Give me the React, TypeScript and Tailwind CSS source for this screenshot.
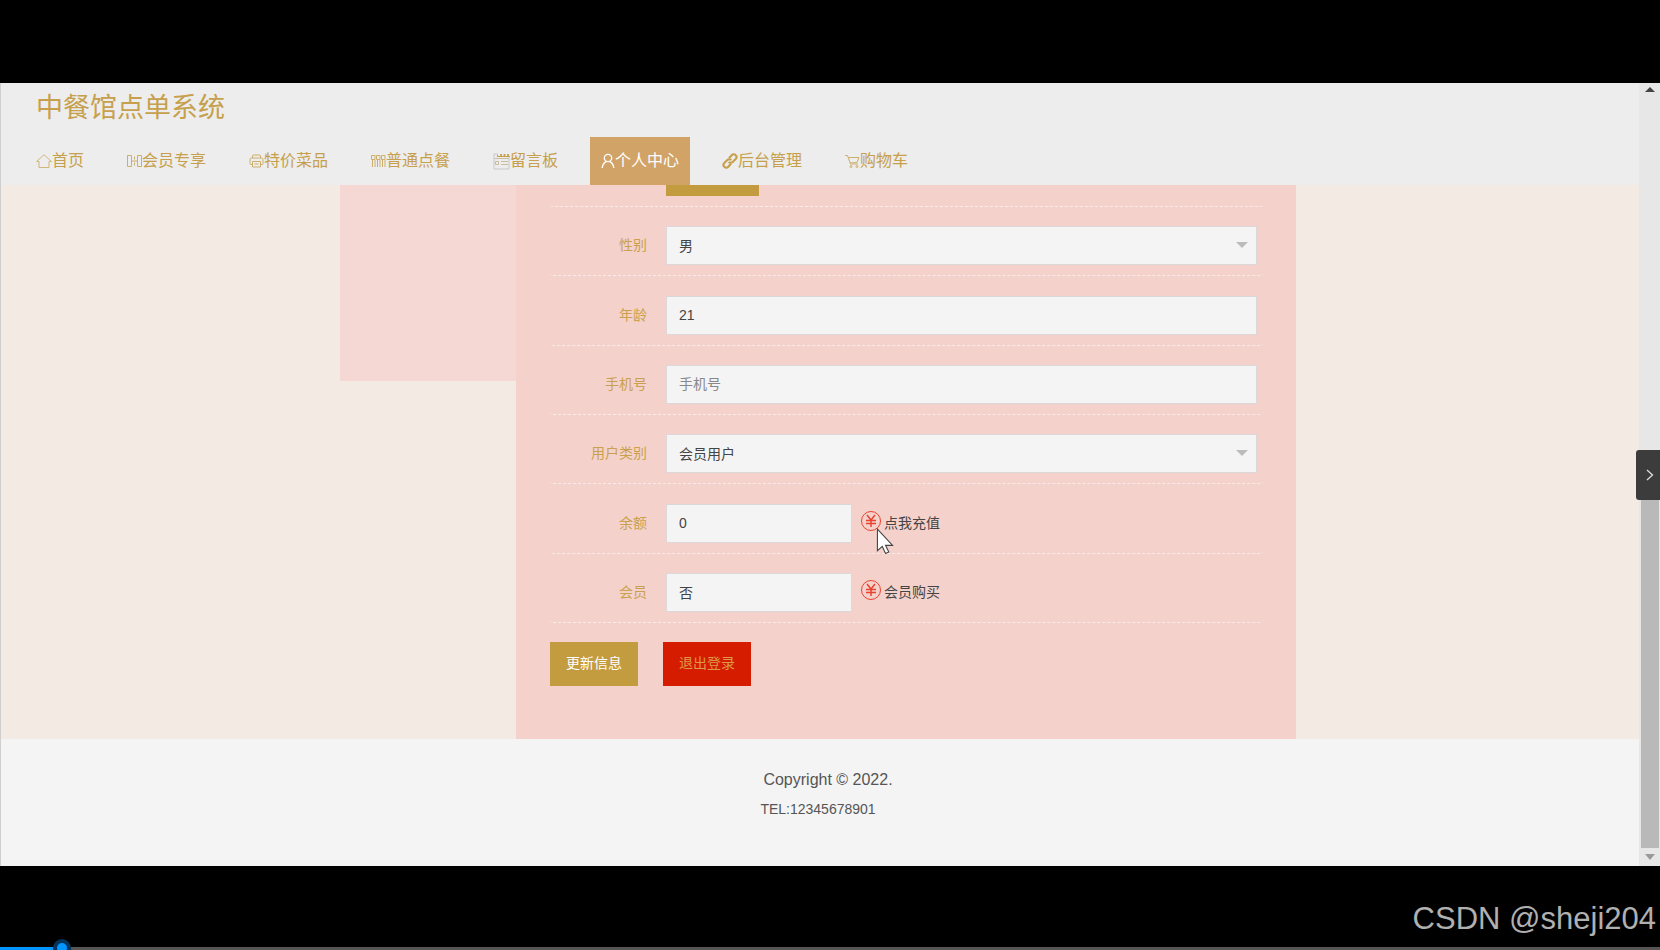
import React from "react";

const stroke = { fill: "none", stroke: "currentColor", strokeWidth: 1 } as const;

const HomeIcon = () => (
  <svg width="16" height="16" viewBox="0 0 16 16" {...stroke} className="opacity-70">
    <path d="M.6 8.500 8 1.700l7.400 6.800H13v6H3v-6z" />
  </svg>
);
const VipIcon = () => (
  <svg width="15" height="16" viewBox="0 0 15 16" {...stroke} className="opacity-80">
    <path d="M.5 2.500h4v11h-4zM10.500 2.500h4v11h-4zM7.500 3.500v3M7.500 9.500v3M5 8h5" />
  </svg>
);
const PrintIcon = () => (
  <svg width="15" height="16" viewBox="0 0 15 16" {...stroke} className="opacity-80">
    <path d="M3.500 5V3a1 1 0 0 1 1-1h6a1 1 0 0 1 1 1v2M3.500 11.500H2a1 1 0 0 1-1-1v-4A1.500 1.500 0 0 1 2.500 5h10A1.500 1.500 0 0 1 14 6.500v4a1 1 0 0 1-1 1h-1.500M3.500 8.500h8v5.500h-8zM5.500 11h4" />
  </svg>
);
const GridIcon = () => (
  <svg width="15" height="16" viewBox="0 0 15 16" {...stroke} className="opacity-80">
    <path d="M.5 2.500h3.500v4H.5zM5.500 2.500h3.500v4H5.500zM10.500 2.500h3.500v4h-3.500zM1.500 7v7M4 7v7M6.500 7v7M9 7v7M11.500 7v7M14 7v7" />
  </svg>
);
const BoardIcon = () => (
  <svg width="17" height="17" viewBox="0 0 17 17" fill="none">
    <path d="M4.500 1H1v15h15V4" stroke="#cbc5c8" />
    <path d="M4.500 4V1.500M5 3.500h12" stroke="currentColor" />
    <path d="M8 1v3M11.500 1v3M15 1v3" stroke="currentColor" strokeWidth="1.800" />
    <path d="M1.500 5.500h14M2.500 8.500h3v3h-3zM8 8.500h7M8 11.500h7" stroke="#c9bd9d" />
  </svg>
);
const UserIcon = () => (
  <svg width="14" height="16" viewBox="0 0 14 16" fill="none" stroke="currentColor" strokeWidth="1.300">
    <circle cx="7" cy="5" r="3.700" />
    <path d="M1.200 15c.4-3.300 2-5.500 4-6.400M12.800 15c-.4-3.300-2-5.500-4-6.400" />
  </svg>
);
const LinkIcon = () => (
  <svg width="16" height="16" viewBox="0 0 16 16" fill="none" stroke="currentColor" strokeWidth="2.100">
    <path d="m7 5.200 2.700-3a2.700 2.700 0 0 1 4 0 2.700 2.700 0 0 1 0 3.800l-3 3a2.700 2.700 0 0 1-4-.2M9 10.800l-2.700 3a2.700 2.700 0 0 1-4 0 2.700 2.700 0 0 1 0-3.800l3-3a2.700 2.700 0 0 1 4 .2" />
  </svg>
);
const CartIcon = () => (
  <svg width="15" height="16" viewBox="0 0 15 16" {...stroke} className="opacity-80">
    <path d="M0 2.500h2.500l3 8.500H13M3.500 4.500h10.500L12 9.500 5 10" />
    <circle cx="6" cy="13.500" r="1" />
    <circle cx="12" cy="13.500" r="1" />
  </svg>
);
const YenIcon = () => (
  <svg width="22" height="22" viewBox="0 0 22 22" fill="none" stroke="#e8432f" className="mb-1">
    <circle cx="11" cy="11" r="9.500" />
    <path strokeWidth="1.500" d="m7 5 4 5 4-5M11 10v7M6 10.500h10M6 13.500h10" />
  </svg>
);

const nav = [
  { label: "首页", icon: <HomeIcon /> },
  { label: "会员专享", icon: <VipIcon /> },
  { label: "特价菜品", icon: <PrintIcon /> },
  { label: "普通点餐", icon: <GridIcon /> },
  { label: "留言板", icon: <BoardIcon /> },
  { label: "个人中心", icon: <UserIcon />, active: true },
  { label: "后台管理", icon: <LinkIcon /> },
  { label: "购物车", icon: <CartIcon /> },
];

const field =
  "h-[39px] rounded-none border border-[#dcd8da] bg-[#f4f4f4] px-3 text-sm text-[#444] placeholder:text-[#888] outline-none appearance-none";

function Row({ id, label, children }: { id: string; label: string; children: React.ReactNode }) {
  return (
    <div className="flex flex-1 items-end rounded-[3px] border-b border-dashed border-[#f8ece8] pb-[10px] pr-[6px]">
      <label htmlFor={id} className="w-[97px] shrink-0 pb-[10px] text-right text-sm leading-5 text-[#c9a14e]">
        {label}
      </label>
      <div className="ml-[19px] flex h-[39px] min-w-0 flex-1 items-center">{children}</div>
    </div>
  );
}

function SelectBox({ id, value }: { id: string; value: string }) {
  return (
    <div className="relative flex flex-1">
      <select id={id} defaultValue={value} className={field + " w-full"}>
        <option>{value}</option>
      </select>
      <span className="pointer-events-none absolute right-[9px] top-[16px] border-x-6 border-t-6 border-x-transparent border-t-[#bbb]" />
    </div>
  );
}

export default function App() {
  return (
    <div className="flex h-screen flex-col overflow-hidden bg-black font-['Liberation_Sans','Noto_Sans_CJK_SC',sans-serif]">
      <div className="h-[83px] shrink-0" />
      <div className="relative flex min-h-0 flex-1">
        <div className="flex min-w-0 flex-1 flex-col border-l border-[#cfcfcf] bg-[#f4eae4]">
          <header className="flex h-[102px] shrink-0 flex-col justify-between bg-[#ededed]">
            <h1 className="pl-[35px] pt-[6px] text-[27px] leading-[38px] text-[#c6a04c]">中餐馆点单系统</h1>
            <nav className="flex gap-[21px] pl-6 text-base text-[#c6a04c]">
              {nav.map((n) => (
                <a
                  key={n.label}
                  href="#"
                  className={
                    "flex h-12 items-center px-[11px] whitespace-nowrap " +
                    (n.active ? "bg-[#d2a367] text-white" : "")
                  }
                >
                  {n.icon}
                  {n.label}
                </a>
              ))}
            </nav>
          </header>

          <main className="flex flex-1 justify-center pr-1">
            <div className="flex w-[956px]">
              <aside className="h-[196px] w-[176px] shrink-0 bg-[#f5d8d4]" />
              <form className="flex flex-1 flex-col bg-[#f4d1cb] pl-[34px] pr-[33px]">
                <div className="h-[22px] shrink-0 rounded-[3px] border-b border-dashed border-[#f8ece8] pl-[116px]">
                  <div className="h-[11px] w-[93px] bg-[#c49c40]" />
                </div>
                <div className="flex h-[416px] flex-col">
                  <Row id="sex" label="性别">
                    <SelectBox id="sex" value="男" />
                  </Row>
                  <Row id="age" label="年龄">
                    <input id="age" defaultValue="21" className={field + " w-full"} />
                  </Row>
                  <Row id="phone" label="手机号">
                    <input id="phone" placeholder="手机号" className={field + " w-full"} />
                  </Row>
                  <Row id="kind" label="用户类别">
                    <SelectBox id="kind" value="会员用户" />
                  </Row>
                  <Row id="balance" label="余额">
                    <input id="balance" defaultValue="0" className={field + " w-[186px]"} />
                    <a href="#" className="relative ml-2 flex items-center gap-[2px] text-sm text-[#444]">
                      <YenIcon />
                      点我充值
                      <svg className="absolute left-4 top-[18px]" width="18" height="26" viewBox="0 0 16 24">
                        <path d="M1 1v20l4.500-4 3 6.500 3-1.400-3-6.100H15z" fill="#fff" stroke="#444" />
                      </svg>
                    </a>
                  </Row>
                  <Row id="member" label="会员">
                    <input id="member" defaultValue="否" className={field + " w-[186px]"} />
                    <a href="#" className="ml-2 flex items-center gap-[2px] text-sm text-[#444]">
                      <YenIcon />
                      会员购买
                    </a>
                  </Row>
                </div>
                <div className="mt-[19px] flex gap-[25px] text-sm">
                  <button type="button" className="h-11 w-[88px] bg-[#c49c40] pb-[2px] text-white">更新信息</button>
                  <button type="button" className="h-11 w-[88px] bg-[#d61c00] pb-[2px] text-[#dc9a45]">退出登录</button>
                </div>
              </form>
            </div>
          </main>

          <footer className="flex h-[127px] shrink-0 flex-col items-center bg-[#f4f4f4] pt-[27px] text-[#555]">
            <p className="pl-4 text-base leading-7">Copyright © 2022.</p>
            <p className="pr-1 text-sm leading-[30px]">TEL:12345678901</p>
          </footer>
        </div>

        <div className="flex w-[21px] shrink-0 flex-col items-center justify-between bg-[#e7e7e7]">
          <span className="mt-1 border-x-5 border-b-5 border-x-transparent border-b-[#444]" />
          <div className="mt-auto h-[352px] w-[18px] bg-[#b9b9b9]" />
          <span className="my-[6px] border-x-5 border-t-6 border-x-transparent border-t-[#999]" />
        </div>

        <button
          type="button"
          aria-label="展开"
          className="absolute right-0 top-[367px] flex h-[50px] w-6 items-center justify-center rounded-l-[3px] bg-[#3c3c3c] pl-1"
        >
          <svg width="8" height="12" viewBox="0 0 8 12" fill="none" stroke="#ddd" strokeWidth="1.300">
            <path d="m1 1 5.500 5L1 11" />
          </svg>
        </button>
      </div>

      <div className="flex h-[81px] shrink-0 items-center justify-end pr-1 pt-6">
        <p className="text-[31px] leading-none text-[#b0b0b0]">CSDN @sheji204</p>
      </div>
      <div className="flex h-[3px] shrink-0 bg-[#555]">
        <div className="relative w-[62px] bg-[#0095ff]">
          <span className="absolute -right-[9px] -top-2 size-[18px] rounded-full border-4 border-[#04335c] bg-[#0095ff]" />
        </div>
      </div>
    </div>
  );
}
